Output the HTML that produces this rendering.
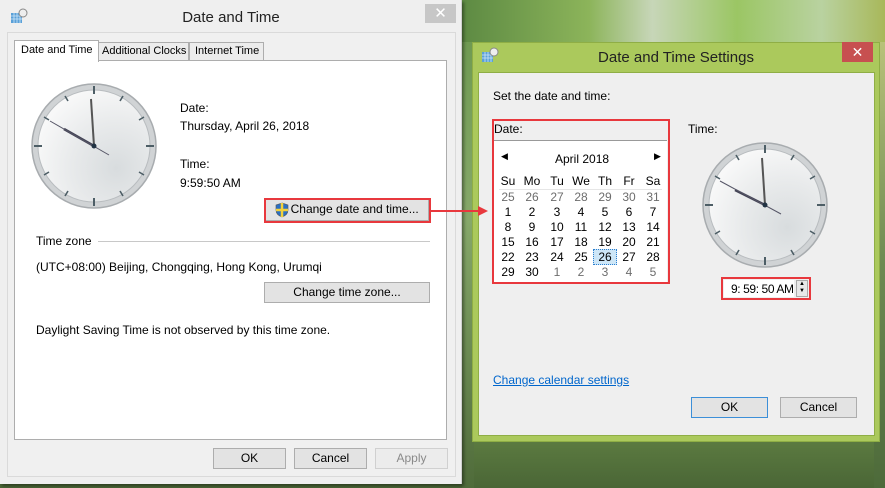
<!DOCTYPE html>
<html><head><meta charset="utf-8"><style>
*{margin:0;padding:0;box-sizing:border-box}
body{width:885px;height:488px;overflow:hidden;position:relative;font-family:"Liberation Sans",sans-serif;font-size:12px;color:#000;
background:linear-gradient(180deg,#a9c77a 0,#7fa35a 60px,#5f8a3e 140px,#5a7d44 250px,#4f6f3a 400px,#4a6636 488px)}
.a{position:absolute}
.btn{position:absolute;background:#e3e3e3;border:1px solid #adadad;text-align:center;line-height:18px;font-size:12px}
.t{position:absolute;white-space:nowrap}
.cal span{position:absolute;width:24px;text-align:center;font-size:12px}
.g{color:#6d6d6d}
</style></head><body>
<div class="a" style="left:462px;top:0;width:423px;height:42px;background:linear-gradient(90deg,#5d8a43 0,#8cb45a 30%,#c7d6b8 45%,#9bc664 65%,#b9d2a0 85%,#a8b85a 100%)"></div>
<div class="a" style="left:462px;top:42px;width:12px;height:446px;background:linear-gradient(180deg,#6f9a52,#86a86a 40%,#4f6b3a)"></div>
<div class="a" style="left:874px;top:42px;width:11px;height:446px;background:linear-gradient(180deg,#b9c27a,#6d8a52 50%,#4d6a3a)"></div>
<div class="a" style="left:474px;top:442px;width:400px;height:46px;background:linear-gradient(180deg,#5b7a40,#4a6636)"></div>

<!-- LEFT WINDOW -->
<div class="a" style="left:0;top:0;width:462px;height:484px;background:#efefef;border-right:1px solid #d0d0d0;box-shadow:2px 2px 3px rgba(0,0,0,.4)"></div>
<svg class="a" style="left:10px;top:8px" width="18" height="18" viewBox="0 0 18 18"><rect x="1" y="5" width="11" height="10" fill="#5aa0d8"/><path d="M1 8h11M1 11h11M4 5v10M7 5v10M10 5v10" stroke="#cfe6f8" stroke-width=".8"/><circle cx="13" cy="5" r="4" fill="#eee" stroke="#888"/></svg>
<div class="t" style="left:0;width:462px;text-align:center;top:9px;font-size:15px;color:#222">Date and Time</div>
<div class="a" style="left:425px;top:4px;width:31px;height:19px;background:#c7c7c7;color:#fff;text-align:center;font-size:15px;line-height:19px">✕</div>
<div class="a" style="left:7px;top:32px;width:449px;height:445px;border:1px solid #dadada;background:#f0f0f0"></div>
<div class="a" style="left:14px;top:60px;width:433px;height:380px;background:#fff;border:1px solid #adadad"></div>
<div class="a" style="left:98px;top:42px;width:91px;height:19px;background:#ececec;border:1px solid #adadad"></div>
<div class="t" style="left:102px;top:45px;font-size:11px">Additional Clocks</div>
<div class="a" style="left:189px;top:42px;width:75px;height:19px;background:#ececec;border:1px solid #adadad"></div>
<div class="t" style="left:195px;top:45px;font-size:11px">Internet Time</div>
<div class="a" style="left:14px;top:40px;width:85px;height:22px;background:#fff;border:1px solid #adadad;border-bottom:none"></div>
<div class="t" style="left:21px;top:44px;font-size:11px">Date and Time</div>

<svg class="a" style="left:29px;top:81px" width="130" height="130" viewBox="-65 -65 130 130">
<defs><radialGradient id="cf" cx="70%" cy="70%" r="80%"><stop offset="0" stop-color="#d8dcde"/><stop offset=".5" stop-color="#e8eaeb"/><stop offset="1" stop-color="#fafafa"/></radialGradient></defs>
<circle r="62" fill="#d0d3d5" stroke="#a8acaf" stroke-width="1.5"/><circle r="56" fill="url(#cf)" stroke="#b8bcbf"/>
<g stroke="#4d5e66" stroke-width="2"><path d="M0-52v-8M0 52v8M-52 0h-8M52 0h8"/><path d="M26-45l3-5M45-26l5-3M45 26l5 3M26 45l3 5M-26 45l-3 5M-45 26l-5 3M-45-26l-5-3M-26-45l-3-5" stroke-width="1.6"/></g>
<line x1="0" y1="0" x2="-3" y2="-47" stroke="#555" stroke-width="2"/>
<line x1="0" y1="0" x2="-30" y2="-17" stroke="#445" stroke-width="2.5"/>
<line x1="15" y1="9" x2="-44" y2="-25" stroke="#556" stroke-width="1"/>
<circle r="2.5" fill="#234"/></svg>

<div class="t" style="left:180px;top:101px">Date:</div>
<div class="t" style="left:180px;top:119px">Thursday, April 26, 2018</div>
<div class="t" style="left:180px;top:157px">Time:</div>
<div class="t" style="left:180px;top:176px">9:59:50 AM</div>
<div class="btn" style="left:265px;top:199px;width:164px;height:22px;padding-left:12px">&nbsp;Change date and time...</div>
<svg class="a" style="left:275px;top:202px" width="14" height="16" viewBox="0 0 14 16"><path d="M7 1L1 3v5c0 4 3 6 6 7 3-1 6-3 6-7V3z" fill="#2a6fc4" stroke="#555" stroke-width=".6"/><path d="M7 1v14M1 8h12" stroke="#f4d23a" stroke-width="2.5"/></svg>
<div class="a" style="left:264px;top:198px;width:167px;height:25px;border:2px solid #e8383d"></div>
<div class="t" style="left:36px;top:234px">Time zone</div>
<div class="a" style="left:98px;top:241px;width:332px;height:1px;background:#c8c8c8"></div>
<div class="t" style="left:36px;top:260px">(UTC+08:00) Beijing, Chongqing, Hong Kong, Urumqi</div>
<div class="btn" style="left:264px;top:282px;width:166px;height:21px">Change time zone...</div>
<div class="t" style="left:36px;top:323px">Daylight Saving Time is not observed by this time zone.</div>
<div class="btn" style="left:213px;top:448px;width:73px;height:21px">OK</div>
<div class="btn" style="left:294px;top:448px;width:73px;height:21px">Cancel</div>
<div class="btn" style="left:375px;top:448px;width:73px;height:21px;color:#8a8a8a;border-color:#d0d0d0;background:#ececec">Apply</div>

<!-- RIGHT WINDOW -->
<div class="a" style="left:472px;top:42px;width:408px;height:400px;background:#abc95c;border:1px solid #8fae45"></div>
<svg class="a" style="left:481px;top:47px" width="18" height="18" viewBox="0 0 18 18"><rect x="1" y="5" width="11" height="10" fill="#5aa0d8"/><path d="M1 8h11M1 11h11M4 5v10M7 5v10M10 5v10" stroke="#cfe6f8" stroke-width=".8"/><circle cx="13" cy="5" r="4" fill="#eee" stroke="#888"/></svg>
<div class="t" style="left:472px;width:408px;text-align:center;top:49px;font-size:15px;color:#222">Date and Time Settings</div>
<div class="a" style="left:842px;top:42px;width:31px;height:20px;background:#c75050;color:#fff;text-align:center;font-size:14px;line-height:20px">✕</div>
<div class="a" style="left:478px;top:72px;width:397px;height:364px;background:#efefef;border:1px solid #8fae45"></div>
<div class="t" style="left:493px;top:89px">Set the date and time:</div>

<div class="a" style="left:494px;top:140px;width:173px;height:142px;background:#fff"></div>
<div class="a" style="left:494px;top:140px;width:173px;height:1px;background:#999"></div>
<div class="t" style="left:494px;top:122px">Date:</div>
<div class="a" style="left:492px;top:119px;width:178px;height:165px;border:2px solid #e8383d"></div>
<div class="t" style="left:501px;top:151px;font-size:9px">◀</div>
<div class="t" style="left:654px;top:151px;font-size:9px">▶</div>
<div class="t" style="left:555px;top:152px">April 2018</div>
<div class="a" style="left:499px;top:189px;width:163px;height:1px;background:#e6e6e6"></div>
<div class="cal">
<span style="left:496px;top:174px">Su</span><span style="left:520px;top:174px">Mo</span><span style="left:545px;top:174px">Tu</span><span style="left:569px;top:174px">We</span><span style="left:593px;top:174px">Th</span><span style="left:617px;top:174px">Fr</span><span style="left:641px;top:174px">Sa</span>
<span class="g" style="left:496px;top:190px">25</span><span class="g" style="left:520px;top:190px">26</span><span class="g" style="left:545px;top:190px">27</span><span class="g" style="left:569px;top:190px">28</span><span class="g" style="left:593px;top:190px">29</span><span class="g" style="left:617px;top:190px">30</span><span class="g" style="left:641px;top:190px">31</span>
<span style="left:496px;top:205px">1</span><span style="left:520px;top:205px">2</span><span style="left:545px;top:205px">3</span><span style="left:569px;top:205px">4</span><span style="left:593px;top:205px">5</span><span style="left:617px;top:205px">6</span><span style="left:641px;top:205px">7</span>
<span style="left:496px;top:220px">8</span><span style="left:520px;top:220px">9</span><span style="left:545px;top:220px">10</span><span style="left:569px;top:220px">11</span><span style="left:593px;top:220px">12</span><span style="left:617px;top:220px">13</span><span style="left:641px;top:220px">14</span>
<span style="left:496px;top:235px">15</span><span style="left:520px;top:235px">16</span><span style="left:545px;top:235px">17</span><span style="left:569px;top:235px">18</span><span style="left:593px;top:235px">19</span><span style="left:617px;top:235px">20</span><span style="left:641px;top:235px">21</span>
<span style="left:496px;top:250px">22</span><span style="left:520px;top:250px">23</span><span style="left:545px;top:250px">24</span><span style="left:569px;top:250px">25</span><span style="left:593px;top:249px;background:#cde6f7;border:1px dotted #2b7fd0;height:16px;line-height:14px">26</span><span style="left:617px;top:250px">27</span><span style="left:641px;top:250px">28</span>
<span style="left:496px;top:265px">29</span><span style="left:520px;top:265px">30</span><span class="g" style="left:545px;top:265px">1</span><span class="g" style="left:569px;top:265px">2</span><span class="g" style="left:593px;top:265px">3</span><span class="g" style="left:617px;top:265px">4</span><span class="g" style="left:641px;top:265px">5</span>
</div>

<div class="t" style="left:688px;top:122px">Time:</div>
<svg class="a" style="left:701px;top:141px" width="128" height="128" viewBox="-64 -64 128 128">
<circle r="62" fill="#d0d3d5" stroke="#a8acaf" stroke-width="1.5"/><circle r="56" fill="url(#cf)" stroke="#b8bcbf"/>
<g stroke="#4d5e66" stroke-width="2"><path d="M0-52v-8M0 52v8M-52 0h-8M52 0h8"/><path d="M26-45l3-5M45-26l5-3M45 26l5 3M26 45l3 5M-26 45l-3 5M-45 26l-5 3M-45-26l-5-3M-26-45l-3-5" stroke-width="1.6"/></g>
<line x1="0" y1="0" x2="-3" y2="-47" stroke="#555" stroke-width="2"/>
<line x1="0" y1="0" x2="-30" y2="-15" stroke="#445" stroke-width="2.5"/>
<line x1="16" y1="9" x2="-45" y2="-24" stroke="#556" stroke-width="1"/>
<circle r="2.5" fill="#234"/></svg>
<div class="a" style="left:724px;top:280px;width:70px;height:17px;background:#fff"></div>
<div class="t" style="left:731px;top:282px;font-size:12px;letter-spacing:-0.4px">9: 59: 50 AM</div>
<div class="a" style="left:796px;top:280px;width:12px;height:17px;background:#e8e8e8;border:1px solid #aaa;font-size:6px;line-height:7px;text-align:center">▲<br>▼</div>
<div class="a" style="left:721px;top:277px;width:90px;height:23px;border:2px solid #e8383d"></div>

<div class="t" style="left:493px;top:373px;color:#0066cc;text-decoration:underline">Change calendar settings</div>
<div class="btn" style="left:691px;top:397px;width:77px;height:21px;border-color:#3c8fd8">OK</div>
<div class="btn" style="left:780px;top:397px;width:77px;height:21px">Cancel</div>

<svg class="a" style="left:430px;top:204px" width="60" height="14"><line x1="0" y1="7" x2="50" y2="7" stroke="#e8383d" stroke-width="2"/><path d="M48 2l10 5-10 5z" fill="#e8383d"/></svg>
</body></html>
